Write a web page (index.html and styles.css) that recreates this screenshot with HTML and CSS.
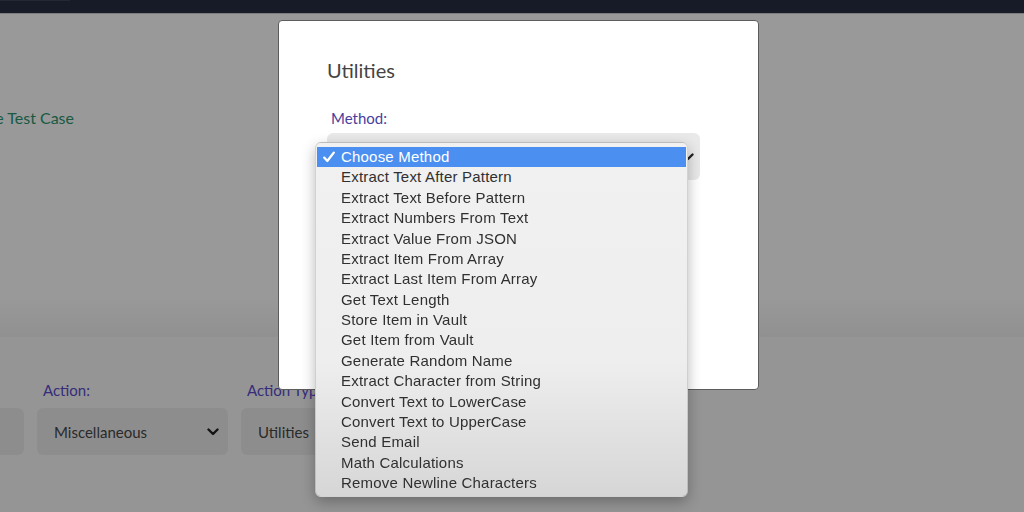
FILE: index.html
```html
<!DOCTYPE html>
<html lang="en">
<head>
<meta charset="utf-8">
<title>Utilities</title>
<link rel="stylesheet" href="styles.css">
</head>
<body>
<div class="app">
  <header class="topbar"><span class="topbar-tab"></span></header>
  <section class="upper">
    <div class="title-clip"><h1 class="page-title">Update Test Case</h1></div>
  </section>
  <section class="lower">
    <div class="form-row">
      <div class="field">
        <label class="field-label">Name:</label>
        <div class="select"></div>
      </div>
      <div class="field">
        <label class="field-label">Action:</label>
        <div class="select"><span>Miscellaneous</span><svg class="chev" viewBox="0 0 12 8"><path d="M1.5 1.5 L6 6 L10.5 1.5"/></svg></div>
      </div>
      <div class="field">
        <label class="field-label">Action Type:</label>
        <div class="select"><span>Utilities</span><svg class="chev" viewBox="0 0 12 8"><path d="M1.5 1.5 L6 6 L10.5 1.5"/></svg></div>
      </div>
    </div>
  </section>
</div>
<div class="backdrop"></div>
<div class="modal">
  <h2 class="modal-title">Utilities</h2>
  <label class="modal-label">Method:</label>
  <div class="modal-select"><span>Choose Method</span><svg class="chev" viewBox="0 0 12 8"><path d="M1.5 1.5 L6 6 L10.5 1.5"/></svg></div>
</div>
<ul class="popup">
  <li class="opt selected"><svg class="check" viewBox="0 0 12 12"><path d="M1.2 6.6 L4.3 10 L10.8 1.6"/></svg>Choose Method</li>
  <li class="opt">Extract Text After Pattern</li>
  <li class="opt">Extract Text Before Pattern</li>
  <li class="opt">Extract Numbers From Text</li>
  <li class="opt">Extract Value From JSON</li>
  <li class="opt">Extract Item From Array</li>
  <li class="opt">Extract Last Item From Array</li>
  <li class="opt">Get Text Length</li>
  <li class="opt">Store Item in Vault</li>
  <li class="opt">Get Item from Vault</li>
  <li class="opt">Generate Random Name</li>
  <li class="opt">Extract Character from String</li>
  <li class="opt">Convert Text to LowerCase</li>
  <li class="opt">Convert Text to UpperCase</li>
  <li class="opt">Send Email</li>
  <li class="opt">Math Calculations</li>
  <li class="opt">Remove Newline Characters</li>
</ul>
</body>
</html>
```
FILE: styles.css
```css
* { box-sizing: border-box; }
html, body {
  margin: 0;
  padding: 0;
  width: 1024px;
  height: 512px;
  overflow: hidden;
  font-family: Lato, "Noto Sans", sans-serif;
  background: #fff;
}
.app {
  display: flex;
  flex-direction: column;
  height: 512px;
}
.topbar {
  height: 14px;
  flex: none;
  background: #252e41;
  border-bottom: 1px solid #cfcfcf;
}
.topbar-tab {
  display: block;
  width: 70px;
  height: 1px;
  background: #3a4458;
}
.upper {
  height: 323px;
  flex: none;
  background: linear-gradient(to bottom, #ffffff 0%, #ffffff 88%, #f1f1f1 100%);
  padding-top: 94px;
}
.title-clip {
  width: 74px;
  display: flex;
  justify-content: flex-end;
}
.page-title {
  margin: 0;
  white-space: nowrap;
  flex: none;
  font-size: 16px;
  font-weight: 400;
  line-height: 20px;
  color: #2c9670;
}
.lower {
  flex: 1;
  background: #f9f9f9;
  padding-top: 44px;
}
.form-row {
  display: flex;
  gap: 13px;
  margin-left: -167px;
}
.field {
  width: 191px;
  flex: none;
}
.field-label {
  display: block;
  margin-left: 6px;
  font-size: 15px;
  line-height: 18px;
  height: 27px;
  color: #5a4bcc;
}
.select {
  height: 47px;
  border-radius: 6px;
  background: #ececec;
  display: flex;
  align-items: center;
  justify-content: space-between;
  padding: 0 9px 0 17px;
  font-size: 15px;
  color: #474747;
}
.chev {
  width: 12px;
  height: 8px;
  fill: none;
  stroke: #222;
  stroke-width: 2.4;
  stroke-linecap: round;
  stroke-linejoin: round;
}
.backdrop {
  position: fixed;
  inset: 0;
  background: rgba(0, 0, 0, 0.4);
}
.modal {
  position: absolute;
  left: 278px;
  top: 20px;
  width: 481px;
  height: 370px;
  background: #fff;
  border: 1px solid #5c5c5c;
  border-radius: 4px;
  padding: 37px 0 0 48px;
}
.modal-title {
  margin: 0;
  font-size: 20px;
  font-weight: 400;
  line-height: 24px;
  color: #444;
}
.modal-label {
  display: block;
  margin: 27px 0 0 4px;
  font-size: 15px;
  line-height: 18px;
  color: #483ea0;
}
.modal-select {
  margin-top: 6px;
  width: 373px;
  height: 47px;
  border-radius: 6px;
  background: #e9e9e9;
  display: flex;
  align-items: center;
  justify-content: space-between;
  padding: 0 6px 0 14px;
  font-size: 15px;
  color: #333;
}
.popup {
  position: absolute;
  left: 315px;
  top: 142px;
  width: 373px;
  height: 355px;
  margin: 0;
  padding: 4px 1px 4px;
  list-style: none;
  border-radius: 6px;
  background: linear-gradient(to bottom, #f1f1f1 0%, #eeeeee 62%, #d6d6d6 100%);
  border: 1px solid rgba(0, 0, 0, 0.12);
  box-shadow: 0 5px 14px rgba(0, 0, 0, 0.28);
  font-family: "Liberation Sans", Arial, sans-serif;
  font-size: 15px;
  letter-spacing: 0.2px;
  color: #303030;
}
.opt {
  height: 20.375px;
  line-height: 20.375px;
  padding-left: 24px;
  position: relative;
  white-space: nowrap;
}
.opt.selected {
  background: #4b8ff0;
  color: #fff;
}
.check {
  position: absolute;
  left: 6px;
  top: 4px;
  width: 12px;
  height: 12px;
  fill: none;
  stroke: #fff;
  stroke-width: 2.3;
  stroke-linecap: round;
  stroke-linejoin: round;
}
```
